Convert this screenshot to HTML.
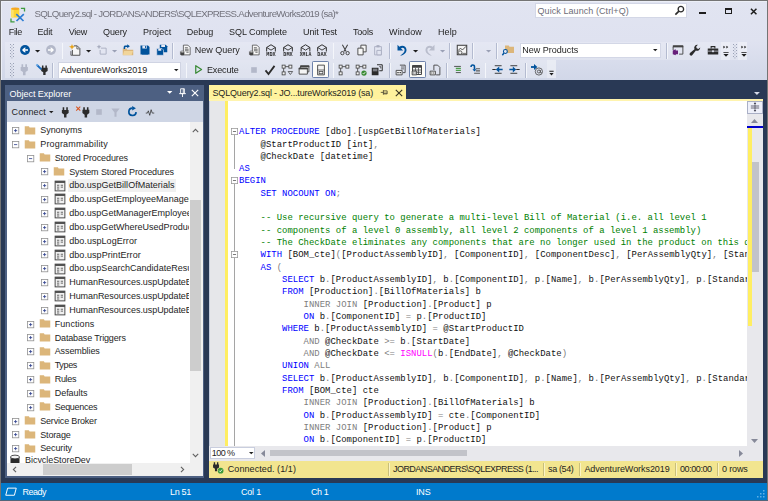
<!DOCTYPE html>
<html lang="en"><head><meta charset="utf-8"><title>SQLQuery2.sql - Microsoft SQL Server Management Studio</title>
<style>
*{box-sizing:border-box;margin:0;padding:0}
html,body{width:768px;height:501px;overflow:hidden;background:#e0e3f0}
body{background:linear-gradient(to bottom,#e1e4f1 0px,#dfe2f0 42px,#d1d7e8 80px,#d1d7e8 100%)}
body{position:relative;font-family:"Liberation Sans", sans-serif;font-size:9px;color:#1e1e1e;}
.a{position:absolute}
svg{overflow:visible}
.t{position:absolute;white-space:pre;line-height:12px;height:12px}
.code{position:absolute;font-family:"Liberation Mono", monospace;font-size:8.93px;letter-spacing:0.022px;line-height:12px;height:12px;white-space:pre;color:#111}
.k{color:#0000ff}.c{color:#008000}.g{color:#808080}.m{color:#ff00ff}
</style></head>
<body>
<div id="win" style="position:absolute;left:0;top:0;width:768px;height:501px;filter:blur(0.3px)">
<div class="a" style="left:5.00px;top:41.60px;width:716.00px;height:18.20px;background:rgba(255,255,255,0.2);"></div>
<div class="a" style="left:721.00px;top:41.60px;width:8.50px;height:18.20px;background:rgba(255,255,255,0.42);"></div>
<div class="a" style="left:729.50px;top:41.60px;width:8.50px;height:18.20px;background:rgba(255,255,255,0.2);"></div>
<div class="a" style="left:738.00px;top:41.60px;width:9.00px;height:18.20px;background:rgba(255,255,255,0.42);"></div>
<div class="a" style="left:5.00px;top:60.40px;width:542.00px;height:18.10px;background:rgba(255,255,255,0.25);"></div>
<div class="a" style="left:547.00px;top:60.40px;width:8.50px;height:18.10px;background:rgba(255,255,255,0.45);"></div>
<svg class="a" style="left:10px;top:5.5px" width="16" height="17" viewBox="0 0 16 17"><rect x="1.200" y="2.400" width="8.100" height="9" rx="0.800" fill="#fcd535"/><rect x="1.200" y="2.400" width="2.500" height="9" fill="#fde36c"/><ellipse cx="5.250" cy="2.700" rx="4.050" ry="1.200" fill="#f6a821"/><path d="M6.300 8.200L13.500 15M13.800 8.200L6.500 15" stroke="#2b7cd3" stroke-width="1.700"/><path d="M10.900 2.300h3.600v3.300" fill="none" stroke="#3f9b3f" stroke-width="1.300"/><path d="M1 12.500v3.300h3.600" fill="none" stroke="#3f9b3f" stroke-width="1.300"/></svg>
<div class="t" id="t1" style="left:34.50px;top:8.31px;color:#72727c;font-size:9.70px;letter-spacing:-0.687px;">SQLQuery2.sql - JORDANSANDERS\SQLEXPRESS.AdventureWorks2019 (sa)*</div>
<div class="a" style="left:534.50px;top:2.80px;width:152.20px;height:15.60px;background:#fff;border:0.5px solid #d3d7e6;"></div>
<div class="t" id="t2" style="left:537.50px;top:5.36px;color:#6d6d78;letter-spacing:0.072px;">Quick Launch (Ctrl+Q)</div>
<svg class="a" style="left:673.50px;top:4.90px" width="11" height="11" viewBox="0 0 16 16"><circle cx="10" cy="6" r="4" fill="none" stroke="#2b2b2b" stroke-width="1.900"/><path d="M7.200 8.800L2 14" stroke="#2b2b2b" stroke-width="2.400"/></svg>
<div class="a" style="left:698.90px;top:11.80px;width:7.20px;height:2.10px;background:#1e1e1e;"></div>
<div class="a" style="left:724.70px;top:8.00px;width:7.70px;height:6.40px;border:1px solid #1e1e1e;border-top-width:2px;"></div>
<svg class="a" style="left:750.30px;top:8.35px" width="7.4" height="6.9" viewBox="0 0 10 10"><path d="M1 1l8 8M9 1l-8 8" stroke="#1e1e1e" stroke-width="2.200"/></svg>
<div class="t" id="t3" style="left:8.75px;top:25.76px;letter-spacing:-0.316px;">File</div>
<div class="t" id="t4" style="left:37.50px;top:25.76px;letter-spacing:-0.129px;">Edit</div>
<div class="t" id="t5" style="left:68.75px;top:25.76px;letter-spacing:-0.277px;">View</div>
<div class="t" id="t6" style="left:103.00px;top:25.76px;letter-spacing:-0.103px;">Query</div>
<div class="t" id="t7" style="left:143.00px;top:25.76px;letter-spacing:0.033px;">Project</div>
<div class="t" id="t8" style="left:186.75px;top:25.76px;letter-spacing:-0.006px;">Debug</div>
<div class="t" id="t9" style="left:229.00px;top:25.76px;letter-spacing:-0.059px;">SQL Complete</div>
<div class="t" id="t10" style="left:303.00px;top:25.76px;letter-spacing:-0.095px;">Unit Test</div>
<div class="t" id="t11" style="left:353.00px;top:25.76px;letter-spacing:-0.203px;">Tools</div>
<div class="t" id="t12" style="left:389.00px;top:25.76px;letter-spacing:0.164px;">Window</div>
<div class="t" id="t13" style="left:438.00px;top:25.76px;letter-spacing:0.121px;">Help</div>
<svg class="a" style="left:9.50px;top:43.50px" width="4" height="14.5" viewBox="0 0 4 14.5"><rect x="0.00" y="0.00" width="0.85" height="0.85" fill="#7f879f"/><rect x="3.00" y="0.00" width="0.85" height="0.85" fill="#7f879f"/><rect x="1.50" y="1.50" width="0.85" height="0.85" fill="#7f879f"/><rect x="0.00" y="3.00" width="0.85" height="0.85" fill="#7f879f"/><rect x="3.00" y="3.00" width="0.85" height="0.85" fill="#7f879f"/><rect x="1.50" y="4.50" width="0.85" height="0.85" fill="#7f879f"/><rect x="0.00" y="6.00" width="0.85" height="0.85" fill="#7f879f"/><rect x="3.00" y="6.00" width="0.85" height="0.85" fill="#7f879f"/><rect x="1.50" y="7.50" width="0.85" height="0.85" fill="#7f879f"/><rect x="0.00" y="9.00" width="0.85" height="0.85" fill="#7f879f"/><rect x="3.00" y="9.00" width="0.85" height="0.85" fill="#7f879f"/><rect x="1.50" y="10.50" width="0.85" height="0.85" fill="#7f879f"/><rect x="0.00" y="12.00" width="0.85" height="0.85" fill="#7f879f"/><rect x="3.00" y="12.00" width="0.85" height="0.85" fill="#7f879f"/><rect x="1.50" y="13.50" width="0.85" height="0.85" fill="#7f879f"/></svg>
<svg class="a" style="left:19.00px;top:44.30px" width="12" height="12" viewBox="0 0 16 16"><circle cx="8" cy="8" r="6.600" fill="#00539c"/><path d="M12 7H7.400l2-2H7L4 8l3 3h2.400l-2-2H12z" fill="#fff"/></svg>
<svg class="a" style="left:35.41px;top:49.98px" width="5.175" height="2.6449999999999996" viewBox="0 0 6 3"><path d="M0 0h6l-3 3z" fill="#1e1e1e"/></svg>
<svg class="a" style="left:45.00px;top:44.30px" width="12" height="12" viewBox="0 0 16 16"><circle cx="8" cy="8" r="6.600" fill="#b3b8c9"/><path d="M4 7h4.6l-2-2H9l3 3-3 3H6.600l2-2H4z" fill="#fff"/></svg>
<div class="a" style="left:61.60px;top:43.00px;width:0.80px;height:15.50px;background:#b4bbd0;"></div>
<div class="a" style="left:62.40px;top:43.00px;width:0.70px;height:15.50px;background:#f4f6fb;"></div>
<svg class="a" style="left:69.00px;top:44.30px" width="12" height="12" viewBox="0 0 16 16"><path d="M6.500 2.500H11l3.500 3.500V15H4.500V8" fill="#f6f6f6" stroke="#424242" stroke-width="1.200"/><path d="M10.500 3v3.500H14" fill="none" stroke="#424242" stroke-width="1"/><path d="M2.500 9.500v5.500M2.500 15h2" stroke="#424242" stroke-width="1"/><path d="M4 0l1.100 2.700L8 3.800 5.100 4.900 4 7.800 2.900 4.900 0 3.800 2.900 2.700z" fill="#e8a317"/></svg>
<svg class="a" style="left:85.51px;top:49.98px" width="5.175" height="2.6449999999999996" viewBox="0 0 6 3"><path d="M0 0h6l-3 3z" fill="#1e1e1e"/></svg>
<svg class="a" style="left:96.00px;top:44.30px" width="12" height="12" viewBox="0 0 16 16"><path d="M6.500 5.500H13.500V13.500H5.500V8" fill="none" stroke="#a8adbf" stroke-width="1.200"/><path d="M4 0.500l1 2.200L7.200 3.700 5 4.700 4 7 3 4.700 0.800 3.700 3 2.700z" fill="#a8adbf"/></svg>
<svg class="a" style="left:111.91px;top:49.98px" width="5.175" height="2.6449999999999996" viewBox="0 0 6 3"><path d="M0 0h6l-3 3z" fill="#9aa0b5"/></svg>
<svg class="a" style="left:122.00px;top:44.30px" width="12" height="12" viewBox="0 0 16 16"><path d="M1 6h5l1 1.500h8V15H1z" fill="#dcb67a"/><path d="M2.800 9.300H14.600l-1.800 5.200H1.300z" fill="#f1d59a"/><path d="M2.200 6.500V4.200C2.200 2.600 3.500 2 5 2h2V0.200L10.500 3 7 5.800V4H5c-.6 0-.8 .3-.8 .8v1.700z" fill="#00539c"/></svg>
<svg class="a" style="left:139.00px;top:44.30px" width="12" height="12" viewBox="0 0 16 16"><path d="M2 2h10l2 2v10H2z" fill="#00539c"/><rect x="4.500" y="2" width="6" height="4" fill="#e6eaf6"/><rect x="8" y="2.800" width="1.600" height="2.400" fill="#00539c"/><rect x="4" y="9" width="8" height="5" fill="#00539c"/></svg>
<svg class="a" style="left:156.00px;top:44.30px" width="12" height="12" viewBox="0 0 16 16"><path d="M5 1h8l2 2v8H5z" fill="#00539c"/><rect x="7" y="1" width="5" height="3" fill="#e6eaf6"/><path d="M1 6h7l2 2v7H1z" fill="#00539c" stroke="#e2e5f1" stroke-width="0.800"/><rect x="3" y="6.400" width="4" height="2.600" fill="#e6eaf6"/></svg>
<div class="a" style="left:172.10px;top:43.00px;width:0.80px;height:15.50px;background:#b4bbd0;"></div>
<div class="a" style="left:172.90px;top:43.00px;width:0.70px;height:15.50px;background:#f4f6fb;"></div>
<svg class="a" style="left:180.00px;top:44.30px" width="12" height="12" viewBox="0 0 16 16"><path d="M4.500 1.500H10.500L13.500 4.500V14.500H4.500z" fill="#f8f8f8" stroke="#424242"/><path d="M6.500 5h4M6.500 7h5M6.500 9h5M8.500 11h3" stroke="#424242" stroke-width="1"/><path d="M0.500 10.500v3.500c0 1.300 5 1.300 5 0v-3.500" fill="#424242" stroke="#424242" stroke-width="0.500"/><ellipse cx="3" cy="10.500" rx="2.500" ry="1.100" fill="#f0f0f0" stroke="#424242" stroke-width="0.800"/></svg>
<div class="t" id="t14" style="left:194.75px;top:44.36px;letter-spacing:-0.002px;">New Query</div>
<svg class="a" style="left:248.75px;top:44.30px" width="12" height="12" viewBox="0 0 16 16"><path d="M4.500 1.500H10.500L13.500 4.500V14.500H4.500z" fill="#f8f8f8" stroke="#424242"/><path d="M6.500 5h4M6.500 7h5M6.500 9h5M8.500 11h3" stroke="#424242" stroke-width="1"/><path d="M0.500 10.500v3.500c0 1.300 5 1.300 5 0v-3.500" fill="#424242" stroke="#424242" stroke-width="0.500"/><ellipse cx="3" cy="10.500" rx="2.500" ry="1.100" fill="#f0f0f0" stroke="#424242" stroke-width="0.800"/></svg>
<svg class="a" style="left:265.00px;top:44.30px" width="12" height="12" viewBox="0 0 16 16"><path d="M2.200 10V4.600L8 1l5.800 3.600V10" fill="none" stroke="#2b2b2b" stroke-width="1.300"/><path d="M2.200 4.600L8 8.200l5.800-3.600" fill="none" stroke="#2b2b2b" stroke-width="1.200"/><text x="8" y="15.600" text-anchor="middle" font-family="Liberation Mono, monospace" font-weight="bold" font-size="6.500" textLength="12.500" lengthAdjust="spacingAndGlyphs" fill="#1e1e1e">MDX</text></svg>
<svg class="a" style="left:281.50px;top:44.30px" width="12" height="12" viewBox="0 0 16 16"><path d="M2.200 10V4.600L8 1l5.800 3.600V10" fill="none" stroke="#2b2b2b" stroke-width="1.300"/><path d="M2.200 4.600L8 8.200l5.800-3.600" fill="none" stroke="#2b2b2b" stroke-width="1.200"/><text x="8" y="15.600" text-anchor="middle" font-family="Liberation Mono, monospace" font-weight="bold" font-size="6.500" textLength="12.500" lengthAdjust="spacingAndGlyphs" fill="#1e1e1e">DMX</text></svg>
<svg class="a" style="left:298.50px;top:44.30px" width="13" height="12" viewBox="0 0 16 16"><path d="M2.200 10V4.600L8 1l5.800 3.600V10" fill="none" stroke="#2b2b2b" stroke-width="1.300"/><path d="M2.200 4.600L8 8.200l5.800-3.600" fill="none" stroke="#2b2b2b" stroke-width="1.200"/><text x="8" y="15.600" text-anchor="middle" font-family="Liberation Mono, monospace" font-weight="bold" font-size="6.500" textLength="15.500" lengthAdjust="spacingAndGlyphs" fill="#1e1e1e">XMLA</text></svg>
<svg class="a" style="left:315.75px;top:44.30px" width="12" height="12" viewBox="0 0 16 16"><path d="M2.200 10V4.600L8 1l5.800 3.600V10" fill="none" stroke="#2b2b2b" stroke-width="1.300"/><path d="M2.200 4.600L8 8.200l5.800-3.600" fill="none" stroke="#2b2b2b" stroke-width="1.200"/><text x="8" y="15.600" text-anchor="middle" font-family="Liberation Mono, monospace" font-weight="bold" font-size="6.500" textLength="12.500" lengthAdjust="spacingAndGlyphs" fill="#1e1e1e">DAX</text></svg>
<div class="a" style="left:332.60px;top:43.00px;width:0.80px;height:15.50px;background:#b4bbd0;"></div>
<div class="a" style="left:333.40px;top:43.00px;width:0.70px;height:15.50px;background:#f4f6fb;"></div>
<svg class="a" style="left:338.75px;top:44.30px" width="12" height="12" viewBox="0 0 16 16"><path d="M4.500 1L9.500 10M11.500 1L6.500 10" stroke="#424242" stroke-width="1.400" fill="none"/><circle cx="4.500" cy="12.200" r="2.200" fill="none" stroke="#424242" stroke-width="1.300"/><circle cx="11.500" cy="12.200" r="2.200" fill="none" stroke="#424242" stroke-width="1.300"/></svg>
<svg class="a" style="left:355.50px;top:44.30px" width="12" height="12" viewBox="0 0 16 16"><path d="M6.500 1.500h7v9h-7z" fill="#f6f6f6" stroke="#424242" stroke-width="1.200"/><path d="M2.500 5.500h7v9h-7z" fill="#f6f6f6" stroke="#424242" stroke-width="1.200"/></svg>
<svg class="a" style="left:371.75px;top:44.30px" width="12" height="12" viewBox="0 0 16 16"><path d="M3.500 3.500h9v11h-9z" fill="none" stroke="#a8adbf" stroke-width="1.200"/><path d="M6 1.500h4v3H6z" fill="#a8adbf"/><path d="M6.500 8.500h6v6h-6z" fill="#e2e5f1" stroke="#a8adbf" stroke-width="1.200"/></svg>
<div class="a" style="left:389.10px;top:43.00px;width:0.80px;height:15.50px;background:#b4bbd0;"></div>
<div class="a" style="left:389.90px;top:43.00px;width:0.70px;height:15.50px;background:#f4f6fb;"></div>
<svg class="a" style="left:396.00px;top:44.30px" width="12" height="12" viewBox="0 0 16 16"><path d="M2 1v7.500h7.500L6.600 5.600C8.600 4.200 11.400 5 11.500 8c.1 2.800-2.500 5-6 7.800 5.500-1.300 8.800-4.300 8.500-8.300C13.700 2.300 8 0.800 4.500 3.600z" fill="#00539c"/></svg>
<svg class="a" style="left:413.16px;top:49.98px" width="5.175" height="2.6449999999999996" viewBox="0 0 6 3"><path d="M0 0h6l-3 3z" fill="#1e1e1e"/></svg>
<svg class="a" style="left:424.00px;top:44.30px" width="12" height="12" viewBox="0 0 16 16"><path d="M14 1v7.500H6.500l2.900-2.900C7.400 4.200 4.600 5 4.500 8c-.1 2.800 2.500 5 6 7.800-5.500-1.300-8.800-4.300-8.500-8.300C2.300 2.300 8 0.800 11.500 3.600z" fill="#b9bdcc"/></svg>
<svg class="a" style="left:439.91px;top:49.98px" width="5.175" height="2.6449999999999996" viewBox="0 0 6 3"><path d="M0 0h6l-3 3z" fill="#9aa0b5"/></svg>
<div class="a" style="left:449.10px;top:43.00px;width:0.80px;height:15.50px;background:#b4bbd0;"></div>
<div class="a" style="left:449.90px;top:43.00px;width:0.70px;height:15.50px;background:#f4f6fb;"></div>
<svg class="a" style="left:455.50px;top:44.30px" width="12" height="12" viewBox="0 0 16 16"><rect x="1.700" y="1.700" width="12.600" height="12.600" fill="#f4f4f4" stroke="#424242" stroke-width="1.400"/><path d="M2.500 9l3.500-3.500 2.500 2.500 5-5" fill="none" stroke="#424242" stroke-width="1.200"/><circle cx="5.500" cy="11.500" r="2.400" fill="#f4f4f4" stroke="#424242" stroke-width="1.100"/><path d="M8.500 12.500h5" stroke="#424242" stroke-width="1"/></svg>
<div class="a" style="left:472.10px;top:43.00px;width:0.80px;height:15.50px;background:#b4bbd0;"></div>
<div class="a" style="left:472.90px;top:43.00px;width:0.70px;height:15.50px;background:#f4f6fb;"></div>
<svg class="a" style="left:486.41px;top:49.98px" width="5.175" height="2.6449999999999996" viewBox="0 0 6 3"><path d="M0 0h6l-3 3z" fill="#9aa0b5"/></svg>
<div class="a" style="left:496.10px;top:43.00px;width:0.80px;height:15.50px;background:#b4bbd0;"></div>
<div class="a" style="left:496.90px;top:43.00px;width:0.70px;height:15.50px;background:#f4f6fb;"></div>
<svg class="a" style="left:502.00px;top:44.30px" width="12" height="12" viewBox="0 0 16 16"><path d="M4 2h5l1 1.500h6V12H4z" fill="#dcb67a"/><circle cx="4.500" cy="10" r="2.600" fill="#e2e5f1" stroke="#00539c" stroke-width="1.400"/><path d="M2.600 12L0.500 15" stroke="#00539c" stroke-width="1.800"/></svg>
<div class="a" style="left:519.60px;top:42.90px;width:141.40px;height:15.60px;background:#fff;border:0.5px solid #d3d7e6;"></div>
<div class="t" id="t15" style="left:522.30px;top:44.26px;letter-spacing:-0.003px;">New Products</div>
<svg class="a" style="left:653.25px;top:49.45px" width="4.5" height="2.3" viewBox="0 0 6 3"><path d="M0 0h6l-3 3z" fill="#1e1e1e"/></svg>
<div class="a" style="left:666.10px;top:43.00px;width:0.80px;height:15.50px;background:#b4bbd0;"></div>
<div class="a" style="left:666.90px;top:43.00px;width:0.70px;height:15.50px;background:#f4f6fb;"></div>
<svg class="a" style="left:671.50px;top:44.30px" width="12" height="12" viewBox="0 0 16 16"><path d="M1.500 2.500h13v11h-5" fill="none" stroke="#424242" stroke-width="1.200"/><path d="M1 2h14v2.500H1z" fill="#424242"/><path d="M1.500 4v4" stroke="#424242" stroke-width="1.200"/><path d="M1 8.500l4-1.500v8l-4-1.500z M5 8.500h3v5H5z" fill="#68217a"/></svg>
<svg class="a" style="left:689.00px;top:44.30px" width="12" height="12" viewBox="0 0 16 16"><path d="M15 4.800a4.300 4.300 0 0 1-5.800 4L4.500 14.800a2 2 0 0 1-3.200-2.800l6-5A4.300 4.300 0 0 1 11.800 1L9.500 3.600l.800 2.200 2.200.800z" fill="#2b2b2b"/></svg>
<svg class="a" style="left:706.50px;top:44.30px" width="12" height="12" viewBox="0 0 16 16"><path d="M1 6h14v8H1z" fill="#2b2b2b"/><path d="M5.500 6V3.500h5V6" fill="none" stroke="#2b2b2b" stroke-width="1.400"/><path d="M1 9.500h14" stroke="#e2e5f1" stroke-width="0.900"/><rect x="6.800" y="8.500" width="2.400" height="2.400" fill="#e2e5f1"/></svg>
<svg class="a" style="left:723.00px;top:44.80px" width="6" height="12" viewBox="0 0 8 16"><path d="M0.500 1l2.500 1.800L0.500 4.600zM4.500 1L7 2.800 4.500 4.600z" fill="#1e1e1e"/><path d="M0.500 9.500h7v1.300h-7z M0.500 12h7L4 15.500z" fill="#1e1e1e"/></svg>
<svg class="a" style="left:732.50px;top:43.50px" width="4" height="14.5" viewBox="0 0 4 14.5"><rect x="0.00" y="0.00" width="0.85" height="0.85" fill="#7f879f"/><rect x="3.00" y="0.00" width="0.85" height="0.85" fill="#7f879f"/><rect x="1.50" y="1.50" width="0.85" height="0.85" fill="#7f879f"/><rect x="0.00" y="3.00" width="0.85" height="0.85" fill="#7f879f"/><rect x="3.00" y="3.00" width="0.85" height="0.85" fill="#7f879f"/><rect x="1.50" y="4.50" width="0.85" height="0.85" fill="#7f879f"/><rect x="0.00" y="6.00" width="0.85" height="0.85" fill="#7f879f"/><rect x="3.00" y="6.00" width="0.85" height="0.85" fill="#7f879f"/><rect x="1.50" y="7.50" width="0.85" height="0.85" fill="#7f879f"/><rect x="0.00" y="9.00" width="0.85" height="0.85" fill="#7f879f"/><rect x="3.00" y="9.00" width="0.85" height="0.85" fill="#7f879f"/><rect x="1.50" y="10.50" width="0.85" height="0.85" fill="#7f879f"/><rect x="0.00" y="12.00" width="0.85" height="0.85" fill="#7f879f"/><rect x="3.00" y="12.00" width="0.85" height="0.85" fill="#7f879f"/><rect x="1.50" y="13.50" width="0.85" height="0.85" fill="#7f879f"/></svg>
<svg class="a" style="left:741.00px;top:44.80px" width="6" height="12" viewBox="0 0 8 16"><path d="M0.500 1l2.500 1.800L0.500 4.600zM4.500 1L7 2.800 4.500 4.600z" fill="#1e1e1e"/><path d="M0.500 9.500h7v1.300h-7z M0.500 12h7L4 15.500z" fill="#1e1e1e"/></svg>
<svg class="a" style="left:9.50px;top:63.00px" width="4" height="15.0" viewBox="0 0 4 15.0"><rect x="0.00" y="0.00" width="0.85" height="0.85" fill="#7f879f"/><rect x="3.00" y="0.00" width="0.85" height="0.85" fill="#7f879f"/><rect x="1.50" y="1.50" width="0.85" height="0.85" fill="#7f879f"/><rect x="0.00" y="3.00" width="0.85" height="0.85" fill="#7f879f"/><rect x="3.00" y="3.00" width="0.85" height="0.85" fill="#7f879f"/><rect x="1.50" y="4.50" width="0.85" height="0.85" fill="#7f879f"/><rect x="0.00" y="6.00" width="0.85" height="0.85" fill="#7f879f"/><rect x="3.00" y="6.00" width="0.85" height="0.85" fill="#7f879f"/><rect x="1.50" y="7.50" width="0.85" height="0.85" fill="#7f879f"/><rect x="0.00" y="9.00" width="0.85" height="0.85" fill="#7f879f"/><rect x="3.00" y="9.00" width="0.85" height="0.85" fill="#7f879f"/><rect x="1.50" y="10.50" width="0.85" height="0.85" fill="#7f879f"/><rect x="0.00" y="12.00" width="0.85" height="0.85" fill="#7f879f"/><rect x="3.00" y="12.00" width="0.85" height="0.85" fill="#7f879f"/><rect x="1.50" y="13.50" width="0.85" height="0.85" fill="#7f879f"/></svg>
<svg class="a" style="left:18.75px;top:64.15px" width="10.5" height="11.5" viewBox="1 0 14 16"><path d="M4.200 0.500h2.300v4h-2.300zM9.500 0.500h2.300v4h-2.300zM3 4.300h10v4.700L9.800 11.200V15.500H6.200V11.200L3 9z" fill="#b3b8c9"/></svg>
<svg class="a" style="left:36.25px;top:64.15px" width="11.5" height="11.5" viewBox="0 0 16 16"><g transform="translate(4.500,1.500) scale(0.9)"><path d="M4.200 0.500h2.300v4h-2.300zM9.500 0.500h2.300v4h-2.300zM3 4.300h10v4.700L9.800 11.200V15.500H6.200V11.200L3 9z" fill="#2b2b2b"/></g><path d="M1 1L7.500 7.500" stroke="#1b6ec2" stroke-width="2.600"/><path d="M0.500 0.500L2.200 2.200" stroke="#7db4e6" stroke-width="2.600"/></svg>
<div class="a" style="left:52.10px;top:62.50px;width:0.80px;height:15.50px;background:#b4bbd0;"></div>
<div class="a" style="left:52.90px;top:62.50px;width:0.70px;height:15.50px;background:#f4f6fb;"></div>
<div class="a" style="left:58.00px;top:61.50px;width:122.50px;height:17.00px;background:#fff;border:0.8px solid #d0d4e3;"></div>
<div class="t" id="t16" style="left:60.75px;top:64.06px;letter-spacing:0.006px;">AdventureWorks2019</div>
<svg class="a" style="left:173.75px;top:69.05px" width="4.5" height="2.3" viewBox="0 0 6 3"><path d="M0 0h6l-3 3z" fill="#1e1e1e"/></svg>
<div class="a" style="left:185.60px;top:62.50px;width:0.80px;height:15.50px;background:#b4bbd0;"></div>
<div class="a" style="left:186.40px;top:62.50px;width:0.70px;height:15.50px;background:#f4f6fb;"></div>
<svg class="a" style="left:192.50px;top:64.40px" width="11" height="11" viewBox="0 0 16 16"><path d="M4 2.500L12.500 8 4 13.500z" fill="none" stroke="#388a34" stroke-width="1.800" stroke-linejoin="round"/></svg>
<div class="t" id="t17" style="left:207.00px;top:64.06px;letter-spacing:-0.147px;">Execute</div>
<svg class="a" style="left:248.50px;top:64.90px" width="10" height="10" viewBox="0 0 16 16"><rect x="3.500" y="3.500" width="9" height="9" fill="#b3b8c9"/></svg>
<svg class="a" style="left:263.75px;top:63.90px" width="12" height="12" viewBox="0 0 16 16"><path d="M2 8.500L6 13.500 14 2.500" fill="none" stroke="#2b2b2b" stroke-width="2.400"/></svg>
<svg class="a" style="left:281.00px;top:63.90px" width="12" height="12" viewBox="0 0 16 16"><rect x="1.500" y="1.500" width="4" height="4" fill="#f4f4f4" stroke="#424242" stroke-width="1.100"/><rect x="10.500" y="1.500" width="4" height="4" fill="#f4f4f4" stroke="#424242" stroke-width="1.100"/><rect x="1.500" y="10.500" width="4" height="4" fill="#f4f4f4" stroke="#424242" stroke-width="1.100"/><path d="M5.500 3.500h5M3.500 5.500v5" stroke="#424242" stroke-width="1.100"/><path d="M9.500 10h6L12.500 14z" fill="none" stroke="#424242" stroke-width="1"/></svg>
<svg class="a" style="left:298.00px;top:63.90px" width="12" height="12" viewBox="0 0 16 16"><path d="M3.500 2.500h11v8h-11z" fill="#f4f4f4" stroke="#424242" stroke-width="1.200"/><path d="M3 2h12v2.200H3z" fill="#424242"/><path d="M1.500 5.500h11v8h-11z" fill="#f4f4f4" stroke="#424242" stroke-width="1.200"/><path d="M1 5h12v2.200H1z" fill="#424242"/></svg>
<div class="a" style="left:312.30px;top:61.30px;width:17.20px;height:17.00px;background:#fdfcf8;border:0.9px solid #6f83ab;border-radius:1.2px;"></div>
<svg class="a" style="left:314.90px;top:63.90px" width="12" height="12" viewBox="0 0 16 16"><path d="M3.500 1.500h9v13h-9z" fill="#f4f4f4" stroke="#424242" stroke-width="1.200"/><path d="M3 8h10" stroke="#424242" stroke-width="1"/><rect x="5.500" y="10" width="5" height="3" fill="#f4f4f4" stroke="#424242" stroke-width="1"/></svg>
<div class="a" style="left:332.60px;top:62.50px;width:0.80px;height:15.50px;background:#b4bbd0;"></div>
<div class="a" style="left:333.40px;top:62.50px;width:0.70px;height:15.50px;background:#f4f6fb;"></div>
<svg class="a" style="left:338.00px;top:63.90px" width="12" height="12" viewBox="0 0 16 16"><rect x="1.500" y="1.500" width="4" height="4" fill="#f4f4f4" stroke="#424242" stroke-width="1.100"/><rect x="10.500" y="1.500" width="4" height="4" fill="#f4f4f4" stroke="#424242" stroke-width="1.100"/><rect x="1.500" y="10.500" width="4" height="4" fill="#f4f4f4" stroke="#424242" stroke-width="1.100"/><path d="M5.500 3.500h5M3.500 5.500v5" stroke="#424242" stroke-width="1.100"/></svg>
<svg class="a" style="left:355.00px;top:63.90px" width="12" height="12" viewBox="0 0 16 16"><rect x="1.500" y="1.500" width="4" height="4" fill="#f4f4f4" stroke="#424242" stroke-width="1.100"/><rect x="10.500" y="1.500" width="4" height="4" fill="#f4f4f4" stroke="#424242" stroke-width="1.100"/><rect x="1.500" y="10.500" width="4" height="4" fill="#f4f4f4" stroke="#424242" stroke-width="1.100"/><path d="M5.500 3.500h5M3.500 5.500v5" stroke="#424242" stroke-width="1.100"/><circle cx="12" cy="12" r="3.500" fill="#388a34"/><path d="M10.200 12l1.400 1.500 2.300-3" stroke="#fff" stroke-width="1" fill="none"/></svg>
<svg class="a" style="left:371.00px;top:63.90px" width="12" height="12" viewBox="0 0 16 16"><path d="M1 5h9v10H1z" fill="#2b2b2b"/><path d="M2.500 7h6M2.500 9h6" stroke="#e2e5f1" stroke-width="0.800"/><path d="M8 1h7v8h-4" fill="none" stroke="#2b2b2b" stroke-width="1.300"/><path d="M11 3.500h2v2.500" stroke="#2b2b2b" stroke-width="1" fill="none"/></svg>
<div class="a" style="left:389.10px;top:62.50px;width:0.80px;height:15.50px;background:#b4bbd0;"></div>
<div class="a" style="left:389.90px;top:62.50px;width:0.70px;height:15.50px;background:#f4f6fb;"></div>
<svg class="a" style="left:394.75px;top:63.90px" width="12" height="12" viewBox="0 0 16 16"><path d="M6.500 1.500h7v10h-3" fill="none" stroke="#424242" stroke-width="1.200"/><path d="M8 4h4M8 6.500h4" stroke="#424242" stroke-width="1"/><path d="M1.500 8.500h8v6h-8z" fill="#f4f4f4" stroke="#424242" stroke-width="1.200"/><path d="M3 11.500h2M6 11.500h2" stroke="#424242" stroke-width="1.600"/></svg>
<div class="a" style="left:408.80px;top:61.30px;width:17.00px;height:17.00px;background:#fdfcf8;border:0.9px solid #6f83ab;border-radius:1.2px;"></div>
<svg class="a" style="left:411.40px;top:63.90px" width="12" height="12" viewBox="0 0 16 16"><path d="M2 2h12v12H2z" fill="#f4f4f4" stroke="#424242" stroke-width="1.300"/><path d="M2 2h12v3H2z" fill="#424242"/><path d="M2 8h12M2 11h12M6 5v9M10 5v9" stroke="#424242" stroke-width="1"/><path d="M1.500 9.500h6v5h-6z" fill="#f4f4f4" stroke="#424242" stroke-width="1.200"/><path d="M3 12h1.200M5 12h1.200" stroke="#424242" stroke-width="1.500"/></svg>
<svg class="a" style="left:428.50px;top:63.90px" width="12" height="12" viewBox="0 0 16 16"><path d="M6.500 8V1.500h5l3 3v10h-5" fill="none" stroke="#424242" stroke-width="1.200"/><path d="M1.500 9.500h7v5h-7z" fill="#f4f4f4" stroke="#424242" stroke-width="1.200"/><path d="M3 12h1.500M5.500 12h1.500" stroke="#424242" stroke-width="1.500"/></svg>
<div class="a" style="left:446.10px;top:62.50px;width:0.80px;height:15.50px;background:#b4bbd0;"></div>
<div class="a" style="left:446.90px;top:62.50px;width:0.70px;height:15.50px;background:#f4f6fb;"></div>
<svg class="a" style="left:453.00px;top:64.90px" width="9" height="9" viewBox="0 0 16 16"><path d="M2 2.500h12M5 13.500h9" stroke="#3a3a3a" stroke-width="1.500"/><path d="M5 6h9M5 9.500h9" stroke="#4da04a" stroke-width="2.200"/></svg>
<svg class="a" style="left:469.50px;top:64.10px" width="11" height="11" viewBox="0 0 16 16"><path d="M8.500 7h6M8.500 10h6M6 13.500h8.500" stroke="#5a5a5a" stroke-width="1.500"/><path d="M6.500 8V4C6.500 0.500 1.500 0.500 1.500 4.500" fill="none" stroke="#00539c" stroke-width="2.300"/><path d="M3.500 7.500h6l-3 3.500z" fill="#00539c"/></svg>
<div class="a" style="left:484.60px;top:62.50px;width:0.80px;height:15.50px;background:#b4bbd0;"></div>
<div class="a" style="left:485.40px;top:62.50px;width:0.70px;height:15.50px;background:#f4f6fb;"></div>
<svg class="a" style="left:492.25px;top:64.40px" width="11" height="11" viewBox="0 0 16 16"><path d="M4 2.500h10M4 13.500h10" stroke="#2b2b2b" stroke-width="1.300"/><path d="M0.500 8h5" stroke="#2b2b2b" stroke-width="1.500"/><path d="M15.500 8H9" stroke="#00539c" stroke-width="2.200"/><path d="M5.500 8l5-4.300v8.600z" fill="#00539c"/></svg>
<svg class="a" style="left:508.50px;top:64.40px" width="11" height="11" viewBox="0 0 16 16"><path d="M2 2.500h10M2 13.500h10" stroke="#2b2b2b" stroke-width="1.300"/><path d="M10.500 8h5" stroke="#2b2b2b" stroke-width="1.500"/><path d="M0.500 8H7" stroke="#00539c" stroke-width="2.200"/><path d="M10.500 8l-5-4.300v8.600z" fill="#00539c"/></svg>
<div class="a" style="left:525.35px;top:62.50px;width:0.80px;height:15.50px;background:#b4bbd0;"></div>
<div class="a" style="left:526.15px;top:62.50px;width:0.70px;height:15.50px;background:#f4f6fb;"></div>
<svg class="a" style="left:531.00px;top:63.60px" width="12" height="12" viewBox="0 0 16 16"><path d="M0 4h5" stroke="#00539c" stroke-width="2.400"/><path d="M8.500 4L4 0v8z" fill="#00539c"/><circle cx="10.500" cy="10" r="4.800" fill="none" stroke="#4a4a4a" stroke-width="1.100"/><circle cx="10.500" cy="10" r="2" fill="none" stroke="#4a4a4a" stroke-width="1.100"/><path d="M12.500 8v3.200c0 1 1.500 1 2 0" fill="none" stroke="#4a4a4a" stroke-width="1"/></svg>
<svg class="a" style="left:549.00px;top:69.90px" width="5" height="6" viewBox="0 0 7 8"><path d="M0.500 1h6v1.200h-6z M0.500 4h6L3.500 7.500z" fill="#1e1e1e"/></svg>
<div class="a" style="left:0.00px;top:80.00px;width:768.00px;height:403.00px;background:#293955;"></div>
<div class="a" style="left:0.00px;top:482.50px;width:768.00px;height:18.50px;background:#007acc;"></div>
<svg class="a" style="left:4.50px;top:486.00px" width="12" height="11" viewBox="0 0 16 14"><path d="M3.500 2.500H15L12.500 12H1z" fill="none" stroke="#fff" stroke-width="1.300"/></svg>
<div class="t" id="t18" style="left:22.50px;top:486.06px;color:#fff;letter-spacing:-0.503px;">Ready</div>
<div class="t" id="t19" style="left:170.00px;top:486.06px;color:#fff;letter-spacing:-0.306px;">Ln 51</div>
<div class="t" id="t20" style="left:241.00px;top:486.06px;color:#fff;letter-spacing:-0.203px;">Col 1</div>
<div class="t" id="t21" style="left:311.00px;top:486.06px;color:#fff;letter-spacing:-0.379px;">Ch 1</div>
<div class="t" id="t22" style="left:416.00px;top:486.06px;color:#fff;letter-spacing:-0.172px;">INS</div>
<svg class="a" style="left:756.75px;top:489.75px" width="7.5" height="7.5" viewBox="0 0 10 10"><path d="M8 0h2v2H8zM8 4h2v2H8zM4 4h2v2H4zM8 8h2v2H8zM4 8h2v2H4zM0 8h2v2H0z" fill="#5fb0e6"/></svg>
<div class="a" style="left:5.00px;top:85.00px;width:199.25px;height:392.50px;background:#4d6082;"></div>
<div class="a" style="left:5.00px;top:85.00px;width:199.25px;height:16.00px;background:#4d6082;"></div>
<div class="t" id="t23" style="left:9.60px;top:87.66px;color:#fff;letter-spacing:-0.035px;">Object Explorer</div>
<svg class="a" style="left:167.30px;top:91.42px" width="5.3999999999999995" height="2.76" viewBox="0 0 6 3"><path d="M0 0h6l-3 3z" fill="#fff"/></svg>
<svg class="a" style="left:178.25px;top:87.62px" width="9" height="9.75" viewBox="0 0 12 13"><path d="M3.500 1h5v6.500h-5zM7 1v6.500" fill="none" stroke="#fff" stroke-width="1.200"/><path d="M1.500 7.500h9M6 7.500V12" stroke="#fff" stroke-width="1.200"/></svg>
<svg class="a" style="left:191.00px;top:89.00px" width="8" height="8" viewBox="0 0 10 10"><path d="M1 1l8 8M9 1l-8 8" stroke="#fff" stroke-width="1.400"/></svg>
<div class="a" style="left:6.50px;top:101.00px;width:196.00px;height:20.70px;background:#cfd6e5;"></div>
<div class="t" id="t24" style="left:11.60px;top:105.56px;color:#1e1e1e;letter-spacing:0.103px;">Connect</div>
<svg class="a" style="left:48.50px;top:111.35px" width="4.5" height="2.3" viewBox="0 0 6 3"><path d="M0 0h6l-3 3z" fill="#1e1e1e"/></svg>
<svg class="a" style="left:60.25px;top:106.60px" width="10.5" height="10.8" viewBox="1 0 14 16"><path d="M4.200 0.500h2.300v4h-2.300zM9.500 0.500h2.300v4h-2.300zM3 4.300h10v4.700L9.800 11.200V15.500H6.200V11.200L3 9z" fill="#2b2b2b"/></svg>
<svg class="a" style="left:75.80px;top:106.00px" width="12" height="12" viewBox="0 0 16 16"><g transform="translate(5.800,1.200) scale(0.92)"><path d="M4.200 0.500h2.300v4h-2.300zM9.500 0.500h2.300v4h-2.300zM3 4.300h10v4.700L9.800 11.200V15.500H6.200V11.200L3 9z" fill="#2b2b2b"/></g><path d="M0.300 0.800l5.400 5.400M5.700 0.800l-5.400 5.400" stroke="#d9531e" stroke-width="1.400"/></svg>
<svg class="a" style="left:94.25px;top:107.00px" width="10" height="10" viewBox="0 0 16 16"><rect x="3.500" y="3.500" width="9" height="9" fill="#b3b8c9"/></svg>
<svg class="a" style="left:110.00px;top:106.80px" width="11" height="11" viewBox="0 0 16 16"><path d="M2 2h12L9.500 8v6h-3V8z" fill="#b3b8c9"/></svg>
<svg class="a" style="left:127.20px;top:106.30px" width="11" height="11" viewBox="0 0 16 16"><path d="M13.300 9A5.300 5.300 0 1 1 8 3.200" fill="none" stroke="#00539c" stroke-width="2.500"/><path d="M7.500 0l5.500 3.200L7.500 6.600z" fill="#00539c"/></svg>
<svg class="a" style="left:143.70px;top:107.50px" width="12" height="9" viewBox="0 0 16 16"><path d="M0.500 9h3l1.500-4 2.500 8 2.500-10 2 6h3.500" fill="none" stroke="#2b2b2b" stroke-width="1.300"/></svg>
<div class="a" style="left:6.50px;top:121.70px;width:196.00px;height:341.50px;background:#fff;overflow:hidden;"></div>
<div class="a" id="tree" style="left:6.5px;top:121.7px;width:182.2px;height:341.5px;background:#fff;overflow:hidden">
<svg class="a" style="left:5.50px;top:5.20px" width="7.2" height="7.2" viewBox="0 0 9 9"><rect x="0.500" y="0.500" width="8" height="8" fill="#fff" stroke="#919191" stroke-width="1"/><path d="M2.500 4.500h4M4.500 2.500v4" stroke="#2b3c8c" stroke-width="1"/></svg>
<svg class="a" style="left:17.90px;top:2.00px" width="12" height="12" viewBox="0 0 16 16"><path d="M1 3h5.500l1 1.500H15V14H1z" fill="#dcb67a"/></svg>
<div class="t" id="t25" style="left:33.70px;top:2.36px;letter-spacing:-0.029px;">Synonyms</div>
<svg class="a" style="left:5.50px;top:19.04px" width="7.2" height="7.2" viewBox="0 0 9 9"><rect x="0.500" y="0.500" width="8" height="8" fill="#fff" stroke="#919191" stroke-width="1"/><path d="M2.500 4.500h4" stroke="#2b3c8c" stroke-width="1"/></svg>
<svg class="a" style="left:17.90px;top:15.84px" width="12" height="12" viewBox="0 0 16 16"><path d="M1 3h5.500l1 1.500H15V14H1z" fill="#dcb67a"/></svg>
<div class="t" id="t26" style="left:33.70px;top:16.20px;letter-spacing:0.185px;">Programmability</div>
<svg class="a" style="left:20.00px;top:32.88px" width="7.2" height="7.2" viewBox="0 0 9 9"><rect x="0.500" y="0.500" width="8" height="8" fill="#fff" stroke="#919191" stroke-width="1"/><path d="M2.500 4.500h4" stroke="#2b3c8c" stroke-width="1"/></svg>
<svg class="a" style="left:32.40px;top:29.68px" width="12" height="12" viewBox="0 0 16 16"><path d="M1 3h5.500l1 1.500H15V14H1z" fill="#dcb67a"/></svg>
<div class="t" id="t27" style="left:48.20px;top:30.04px;letter-spacing:-0.103px;">Stored Procedures</div>
<svg class="a" style="left:34.50px;top:46.72px" width="7.2" height="7.2" viewBox="0 0 9 9"><rect x="0.500" y="0.500" width="8" height="8" fill="#fff" stroke="#919191" stroke-width="1"/><path d="M2.500 4.500h4M4.500 2.500v4" stroke="#2b3c8c" stroke-width="1"/></svg>
<svg class="a" style="left:46.90px;top:43.52px" width="12" height="12" viewBox="0 0 16 16"><path d="M1 3h5.500l1 1.500H15V14H1z" fill="#dcb67a"/></svg>
<div class="t" id="t28" style="left:62.70px;top:43.88px;letter-spacing:-0.115px;">System Stored Procedures</div>
<div class="a" style="left:61.30px;top:57.46px;width:108.60px;height:12.80px;background:#f0f0f0;"></div>
<svg class="a" style="left:34.50px;top:60.56px" width="7.2" height="7.2" viewBox="0 0 9 9"><rect x="0.500" y="0.500" width="8" height="8" fill="#fff" stroke="#919191" stroke-width="1"/><path d="M2.500 4.500h4M4.500 2.500v4" stroke="#2b3c8c" stroke-width="1"/></svg>
<svg class="a" style="left:47.40px;top:57.86px" width="12" height="12" viewBox="0 0 16 16"><rect x="1.500" y="1.500" width="13" height="13" fill="#f0f0f0" stroke="#484848" stroke-width="1.300"/><path d="M1.500 2.700h13" stroke="#484848" stroke-width="2.400"/><path d="M4 7h3M4 9.500h3M4 12h3M9 7h3M9 9.500h3" stroke="#5a5a5a" stroke-width="1.200"/></svg>
<div class="t" id="t29" style="left:62.70px;top:57.72px;letter-spacing:0.030px;">dbo.uspGetBillOfMaterials</div>
<svg class="a" style="left:34.50px;top:74.40px" width="7.2" height="7.2" viewBox="0 0 9 9"><rect x="0.500" y="0.500" width="8" height="8" fill="#fff" stroke="#919191" stroke-width="1"/><path d="M2.500 4.500h4M4.500 2.500v4" stroke="#2b3c8c" stroke-width="1"/></svg>
<svg class="a" style="left:47.40px;top:71.70px" width="12" height="12" viewBox="0 0 16 16"><rect x="1.500" y="1.500" width="13" height="13" fill="#f0f0f0" stroke="#484848" stroke-width="1.300"/><path d="M1.500 2.700h13" stroke="#484848" stroke-width="2.400"/><path d="M4 7h3M4 9.500h3M4 12h3M9 7h3M9 9.500h3" stroke="#5a5a5a" stroke-width="1.200"/></svg>
<div class="t" id="t30" style="left:62.70px;top:71.56px;letter-spacing:0.02px;">dbo.uspGetEmployeeManagers</div>
<svg class="a" style="left:34.50px;top:88.24px" width="7.2" height="7.2" viewBox="0 0 9 9"><rect x="0.500" y="0.500" width="8" height="8" fill="#fff" stroke="#919191" stroke-width="1"/><path d="M2.500 4.500h4M4.500 2.500v4" stroke="#2b3c8c" stroke-width="1"/></svg>
<svg class="a" style="left:47.40px;top:85.54px" width="12" height="12" viewBox="0 0 16 16"><rect x="1.500" y="1.500" width="13" height="13" fill="#f0f0f0" stroke="#484848" stroke-width="1.300"/><path d="M1.500 2.700h13" stroke="#484848" stroke-width="2.400"/><path d="M4 7h3M4 9.500h3M4 12h3M9 7h3M9 9.500h3" stroke="#5a5a5a" stroke-width="1.200"/></svg>
<div class="t" id="t31" style="left:62.70px;top:85.40px;letter-spacing:0.02px;">dbo.uspGetManagerEmployees</div>
<svg class="a" style="left:34.50px;top:102.08px" width="7.2" height="7.2" viewBox="0 0 9 9"><rect x="0.500" y="0.500" width="8" height="8" fill="#fff" stroke="#919191" stroke-width="1"/><path d="M2.500 4.500h4M4.500 2.500v4" stroke="#2b3c8c" stroke-width="1"/></svg>
<svg class="a" style="left:47.40px;top:99.38px" width="12" height="12" viewBox="0 0 16 16"><rect x="1.500" y="1.500" width="13" height="13" fill="#f0f0f0" stroke="#484848" stroke-width="1.300"/><path d="M1.500 2.700h13" stroke="#484848" stroke-width="2.400"/><path d="M4 7h3M4 9.500h3M4 12h3M9 7h3M9 9.500h3" stroke="#5a5a5a" stroke-width="1.200"/></svg>
<div class="t" id="t32" style="left:62.70px;top:99.24px;letter-spacing:0.02px;">dbo.uspGetWhereUsedProductID</div>
<svg class="a" style="left:34.50px;top:115.92px" width="7.2" height="7.2" viewBox="0 0 9 9"><rect x="0.500" y="0.500" width="8" height="8" fill="#fff" stroke="#919191" stroke-width="1"/><path d="M2.500 4.500h4M4.500 2.500v4" stroke="#2b3c8c" stroke-width="1"/></svg>
<svg class="a" style="left:47.40px;top:113.22px" width="12" height="12" viewBox="0 0 16 16"><rect x="1.500" y="1.500" width="13" height="13" fill="#f0f0f0" stroke="#484848" stroke-width="1.300"/><path d="M1.500 2.700h13" stroke="#484848" stroke-width="2.400"/><path d="M4 7h3M4 9.500h3M4 12h3M9 7h3M9 9.500h3" stroke="#5a5a5a" stroke-width="1.200"/></svg>
<div class="t" id="t33" style="left:62.70px;top:113.08px;letter-spacing:0.050px;">dbo.uspLogError</div>
<svg class="a" style="left:34.50px;top:129.76px" width="7.2" height="7.2" viewBox="0 0 9 9"><rect x="0.500" y="0.500" width="8" height="8" fill="#fff" stroke="#919191" stroke-width="1"/><path d="M2.500 4.500h4M4.500 2.500v4" stroke="#2b3c8c" stroke-width="1"/></svg>
<svg class="a" style="left:47.40px;top:127.06px" width="12" height="12" viewBox="0 0 16 16"><rect x="1.500" y="1.500" width="13" height="13" fill="#f0f0f0" stroke="#484848" stroke-width="1.300"/><path d="M1.500 2.700h13" stroke="#484848" stroke-width="2.400"/><path d="M4 7h3M4 9.500h3M4 12h3M9 7h3M9 9.500h3" stroke="#5a5a5a" stroke-width="1.200"/></svg>
<div class="t" id="t34" style="left:62.70px;top:126.92px;letter-spacing:0.062px;">dbo.uspPrintError</div>
<svg class="a" style="left:34.50px;top:143.60px" width="7.2" height="7.2" viewBox="0 0 9 9"><rect x="0.500" y="0.500" width="8" height="8" fill="#fff" stroke="#919191" stroke-width="1"/><path d="M2.500 4.500h4M4.500 2.500v4" stroke="#2b3c8c" stroke-width="1"/></svg>
<svg class="a" style="left:47.40px;top:140.90px" width="12" height="12" viewBox="0 0 16 16"><rect x="1.500" y="1.500" width="13" height="13" fill="#f0f0f0" stroke="#484848" stroke-width="1.300"/><path d="M1.500 2.700h13" stroke="#484848" stroke-width="2.400"/><path d="M4 7h3M4 9.500h3M4 12h3M9 7h3M9 9.500h3" stroke="#5a5a5a" stroke-width="1.200"/></svg>
<div class="t" id="t35" style="left:62.70px;top:140.76px;letter-spacing:0.02px;">dbo.uspSearchCandidateResumes</div>
<svg class="a" style="left:34.50px;top:157.44px" width="7.2" height="7.2" viewBox="0 0 9 9"><rect x="0.500" y="0.500" width="8" height="8" fill="#fff" stroke="#919191" stroke-width="1"/><path d="M2.500 4.500h4M4.500 2.500v4" stroke="#2b3c8c" stroke-width="1"/></svg>
<svg class="a" style="left:47.40px;top:154.74px" width="12" height="12" viewBox="0 0 16 16"><rect x="1.500" y="1.500" width="13" height="13" fill="#f0f0f0" stroke="#484848" stroke-width="1.300"/><path d="M1.500 2.700h13" stroke="#484848" stroke-width="2.400"/><path d="M4 7h3M4 9.500h3M4 12h3M9 7h3M9 9.500h3" stroke="#5a5a5a" stroke-width="1.200"/></svg>
<div class="t" id="t36" style="left:62.70px;top:154.60px;letter-spacing:-0.06px;">HumanResources.uspUpdateEmployeeHireInfo</div>
<svg class="a" style="left:34.50px;top:171.28px" width="7.2" height="7.2" viewBox="0 0 9 9"><rect x="0.500" y="0.500" width="8" height="8" fill="#fff" stroke="#919191" stroke-width="1"/><path d="M2.500 4.500h4M4.500 2.500v4" stroke="#2b3c8c" stroke-width="1"/></svg>
<svg class="a" style="left:47.40px;top:168.58px" width="12" height="12" viewBox="0 0 16 16"><rect x="1.500" y="1.500" width="13" height="13" fill="#f0f0f0" stroke="#484848" stroke-width="1.300"/><path d="M1.500 2.700h13" stroke="#484848" stroke-width="2.400"/><path d="M4 7h3M4 9.500h3M4 12h3M9 7h3M9 9.500h3" stroke="#5a5a5a" stroke-width="1.200"/></svg>
<div class="t" id="t37" style="left:62.70px;top:168.44px;letter-spacing:-0.06px;">HumanResources.uspUpdateEmployeeLogin</div>
<svg class="a" style="left:34.50px;top:185.12px" width="7.2" height="7.2" viewBox="0 0 9 9"><rect x="0.500" y="0.500" width="8" height="8" fill="#fff" stroke="#919191" stroke-width="1"/><path d="M2.500 4.500h4M4.500 2.500v4" stroke="#2b3c8c" stroke-width="1"/></svg>
<svg class="a" style="left:47.40px;top:182.42px" width="12" height="12" viewBox="0 0 16 16"><rect x="1.500" y="1.500" width="13" height="13" fill="#f0f0f0" stroke="#484848" stroke-width="1.300"/><path d="M1.500 2.700h13" stroke="#484848" stroke-width="2.400"/><path d="M4 7h3M4 9.500h3M4 12h3M9 7h3M9 9.500h3" stroke="#5a5a5a" stroke-width="1.200"/></svg>
<div class="t" id="t38" style="left:62.70px;top:182.28px;letter-spacing:-0.06px;">HumanResources.uspUpdateEmployeePersonalInfo</div>
<svg class="a" style="left:20.00px;top:198.96px" width="7.2" height="7.2" viewBox="0 0 9 9"><rect x="0.500" y="0.500" width="8" height="8" fill="#fff" stroke="#919191" stroke-width="1"/><path d="M2.500 4.500h4M4.500 2.500v4" stroke="#2b3c8c" stroke-width="1"/></svg>
<svg class="a" style="left:32.40px;top:195.76px" width="12" height="12" viewBox="0 0 16 16"><path d="M1 3h5.500l1 1.500H15V14H1z" fill="#dcb67a"/></svg>
<div class="t" id="t39" style="left:48.20px;top:196.12px;letter-spacing:0.063px;">Functions</div>
<svg class="a" style="left:20.00px;top:212.80px" width="7.2" height="7.2" viewBox="0 0 9 9"><rect x="0.500" y="0.500" width="8" height="8" fill="#fff" stroke="#919191" stroke-width="1"/><path d="M2.500 4.500h4M4.500 2.500v4" stroke="#2b3c8c" stroke-width="1"/></svg>
<svg class="a" style="left:32.40px;top:209.60px" width="12" height="12" viewBox="0 0 16 16"><path d="M1 3h5.500l1 1.500H15V14H1z" fill="#dcb67a"/></svg>
<div class="t" id="t40" style="left:48.20px;top:209.96px;letter-spacing:-0.144px;">Database Triggers</div>
<svg class="a" style="left:20.00px;top:226.64px" width="7.2" height="7.2" viewBox="0 0 9 9"><rect x="0.500" y="0.500" width="8" height="8" fill="#fff" stroke="#919191" stroke-width="1"/><path d="M2.500 4.500h4M4.500 2.500v4" stroke="#2b3c8c" stroke-width="1"/></svg>
<svg class="a" style="left:32.40px;top:223.44px" width="12" height="12" viewBox="0 0 16 16"><path d="M1 3h5.500l1 1.500H15V14H1z" fill="#dcb67a"/></svg>
<div class="t" id="t41" style="left:48.20px;top:223.80px;letter-spacing:-0.102px;">Assemblies</div>
<svg class="a" style="left:20.00px;top:240.48px" width="7.2" height="7.2" viewBox="0 0 9 9"><rect x="0.500" y="0.500" width="8" height="8" fill="#fff" stroke="#919191" stroke-width="1"/><path d="M2.500 4.500h4M4.500 2.500v4" stroke="#2b3c8c" stroke-width="1"/></svg>
<svg class="a" style="left:32.40px;top:237.28px" width="12" height="12" viewBox="0 0 16 16"><path d="M1 3h5.500l1 1.500H15V14H1z" fill="#dcb67a"/></svg>
<div class="t" id="t42" style="left:48.20px;top:237.64px;letter-spacing:-0.343px;">Types</div>
<svg class="a" style="left:20.00px;top:254.32px" width="7.2" height="7.2" viewBox="0 0 9 9"><rect x="0.500" y="0.500" width="8" height="8" fill="#fff" stroke="#919191" stroke-width="1"/><path d="M2.500 4.500h4M4.500 2.500v4" stroke="#2b3c8c" stroke-width="1"/></svg>
<svg class="a" style="left:32.40px;top:251.12px" width="12" height="12" viewBox="0 0 16 16"><path d="M1 3h5.500l1 1.500H15V14H1z" fill="#dcb67a"/></svg>
<div class="t" id="t43" style="left:48.20px;top:251.48px;letter-spacing:-0.303px;">Rules</div>
<svg class="a" style="left:20.00px;top:268.16px" width="7.2" height="7.2" viewBox="0 0 9 9"><rect x="0.500" y="0.500" width="8" height="8" fill="#fff" stroke="#919191" stroke-width="1"/><path d="M2.500 4.500h4M4.500 2.500v4" stroke="#2b3c8c" stroke-width="1"/></svg>
<svg class="a" style="left:32.40px;top:264.96px" width="12" height="12" viewBox="0 0 16 16"><path d="M1 3h5.500l1 1.500H15V14H1z" fill="#dcb67a"/></svg>
<div class="t" id="t44" style="left:48.20px;top:265.32px;letter-spacing:-0.029px;">Defaults</div>
<svg class="a" style="left:20.00px;top:282.00px" width="7.2" height="7.2" viewBox="0 0 9 9"><rect x="0.500" y="0.500" width="8" height="8" fill="#fff" stroke="#919191" stroke-width="1"/><path d="M2.500 4.500h4M4.500 2.500v4" stroke="#2b3c8c" stroke-width="1"/></svg>
<svg class="a" style="left:32.40px;top:278.80px" width="12" height="12" viewBox="0 0 16 16"><path d="M1 3h5.500l1 1.500H15V14H1z" fill="#dcb67a"/></svg>
<div class="t" id="t45" style="left:48.20px;top:279.16px;letter-spacing:-0.283px;">Sequences</div>
<svg class="a" style="left:5.50px;top:295.84px" width="7.2" height="7.2" viewBox="0 0 9 9"><rect x="0.500" y="0.500" width="8" height="8" fill="#fff" stroke="#919191" stroke-width="1"/><path d="M2.500 4.500h4M4.500 2.500v4" stroke="#2b3c8c" stroke-width="1"/></svg>
<svg class="a" style="left:17.90px;top:292.64px" width="12" height="12" viewBox="0 0 16 16"><path d="M1 3h5.500l1 1.500H15V14H1z" fill="#dcb67a"/></svg>
<div class="t" id="t46" style="left:33.70px;top:293.00px;letter-spacing:-0.174px;">Service Broker</div>
<svg class="a" style="left:5.50px;top:309.68px" width="7.2" height="7.2" viewBox="0 0 9 9"><rect x="0.500" y="0.500" width="8" height="8" fill="#fff" stroke="#919191" stroke-width="1"/><path d="M2.500 4.500h4M4.500 2.500v4" stroke="#2b3c8c" stroke-width="1"/></svg>
<svg class="a" style="left:17.90px;top:306.48px" width="12" height="12" viewBox="0 0 16 16"><path d="M1 3h5.500l1 1.500H15V14H1z" fill="#dcb67a"/></svg>
<div class="t" id="t47" style="left:33.70px;top:306.84px;letter-spacing:-0.147px;">Storage</div>
<svg class="a" style="left:5.50px;top:323.52px" width="7.2" height="7.2" viewBox="0 0 9 9"><rect x="0.500" y="0.500" width="8" height="8" fill="#fff" stroke="#919191" stroke-width="1"/><path d="M2.500 4.500h4M4.500 2.500v4" stroke="#2b3c8c" stroke-width="1"/></svg>
<svg class="a" style="left:17.90px;top:320.32px" width="12" height="12" viewBox="0 0 16 16"><path d="M1 3h5.500l1 1.500H15V14H1z" fill="#dcb67a"/></svg>
<div class="t" id="t48" style="left:33.70px;top:320.68px;letter-spacing:-0.089px;">Security</div>
<svg class="a" style="left:2.80px;top:332.36px" width="12" height="12" viewBox="0 0 16 16"><path d="M2 4v8c0 2.500 12 2.500 12 0V4" fill="#2b2b2b"/><ellipse cx="8" cy="4" rx="6" ry="2.500" fill="#f4f4f4" stroke="#2b2b2b" stroke-width="1.100"/></svg>
<div class="t" id="t49" style="left:18.60px;top:332.72px;letter-spacing:-0.06px;">BicycleStoreDev</div>
</div>
<div class="a" style="left:189.50px;top:121.70px;width:13.00px;height:341.50px;background:#f0f0f0;"></div>
<svg class="a" style="left:192.00px;top:127.50px" width="7" height="5" viewBox="0 0 9 6"><path d="M1 5l3.500-3.500L8 5" fill="none" stroke="#606060" stroke-width="1.400"/></svg>
<div class="a" style="left:190.20px;top:199.50px;width:10.70px;height:171.00px;background:#cdcdcd;"></div>
<svg class="a" style="left:192.00px;top:453.00px" width="7" height="5" viewBox="0 0 9 6"><path d="M1 1l3.500 3.500L8 1" fill="none" stroke="#606060" stroke-width="1.400"/></svg>
<div class="a" style="left:6.50px;top:463.20px;width:196.00px;height:12.50px;background:#f0f0f0;"></div>
<svg class="a" style="left:11.50px;top:466.00px" width="5" height="7" viewBox="0 0 6 9"><path d="M5 1L1.500 4.500 5 8" fill="none" stroke="#606060" stroke-width="1.400"/></svg>
<div class="a" style="left:43.00px;top:464.20px;width:88.50px;height:10.50px;background:#cdcdcd;"></div>
<svg class="a" style="left:179.50px;top:466.00px" width="5" height="7" viewBox="0 0 6 9"><path d="M1 1l3.500 3.500L1 8" fill="none" stroke="#606060" stroke-width="1.400"/></svg>
<div class="a" style="left:208.50px;top:85.00px;width:197.75px;height:14.00px;background:#fff29d;"></div>
<div class="t" id="t50" style="left:212.50px;top:87.26px;color:#1e1e1e;letter-spacing:-0.177px;">SQLQuery2.sql - JO...tureWorks2019 (sa)</div>
<svg class="a" style="left:380.38px;top:89.12px" width="8.25" height="6.75" viewBox="0 0 11 9"><path d="M4.500 1.500v6M4.500 2.500h5v4h-5M9.500 5.500h-5M1 4.500h3.500" fill="none" stroke="#4a4530" stroke-width="1.100"/></svg>
<svg class="a" style="left:394.75px;top:88.70px" width="8" height="8" viewBox="0 0 10 10"><path d="M1 1l8 8M9 1l-8 8" stroke="#3a3624" stroke-width="1.400"/></svg>
<svg class="a" style="left:754.48px;top:91.50px" width="5.8500000000000005" height="2.9899999999999998" viewBox="0 0 6 3"><path d="M0 0h6l-3 3z" fill="#d6dbe9"/></svg>
<div class="a" style="left:208.50px;top:98.50px;width:554.00px;height:2.60px;background:#fff4ae;"></div>
<div class="a" id="editor" style="left:208.5px;top:101.0px;width:554px;height:376.5px;background:#fff;overflow:hidden">
<div class="a" style="left:0.00px;top:0.00px;width:16.10px;height:345.00px;background:#e6e7ea;"></div>
<div class="a" style="left:0.00px;top:0.00px;width:1.20px;height:376.50px;background:#c3cbdc;"></div>
<div class="a" style="left:16.10px;top:0.00px;width:3.70px;height:345.00px;background:#ffee62;"></div>
<div class="a" style="left:25.10px;top:33.00px;width:0.80px;height:35.00px;background:#a5a5a5;"></div>
<div class="a" style="left:25.10px;top:83.00px;width:0.80px;height:262.00px;background:#a5a5a5;"></div>
<div class="a" id="codeclip" style="left:0;top:0;width:538.75px;height:345px;overflow:hidden">
<div class="code" style="left:30.50px;top:25.20px"><span class="k">ALTER PROCEDURE</span> [dbo]<span class="g">.</span>[uspGetBillOfMaterials]</div>
<svg class="a" style="left:22.00px;top:27.05px" width="7" height="7" viewBox="0 0 9 9"><rect x="0.500" y="0.500" width="8" height="8" fill="#fff" stroke="#9a9a9a"/><path d="M2.500 4.500h4" stroke="#555" stroke-width="1"/></svg>
<div class="code" style="left:30.50px;top:37.52px">    @StartProductID [int]<span class="g">,</span></div>
<div class="code" style="left:30.50px;top:49.84px">    @CheckDate [datetime]</div>
<div class="code" style="left:30.50px;top:62.16px"><span class="k">AS</span></div>
<div class="code" style="left:30.50px;top:74.48px"><span class="k">BEGIN</span></div>
<svg class="a" style="left:22.00px;top:76.33px" width="7" height="7" viewBox="0 0 9 9"><rect x="0.500" y="0.500" width="8" height="8" fill="#fff" stroke="#9a9a9a"/><path d="M2.500 4.500h4" stroke="#555" stroke-width="1"/></svg>
<div class="code" style="left:30.50px;top:86.80px">    <span class="k">SET NOCOUNT ON</span><span class="g">;</span></div>
<div class="code" style="left:30.50px;top:111.44px">    <span class="c">-- Use recursive query to generate a multi-level Bill of Material (i.e. all level 1</span></div>
<div class="code" style="left:30.50px;top:123.76px">    <span class="c">-- components of a level 0 assembly, all level 2 components of a level 1 assembly)</span></div>
<div class="code" style="left:30.50px;top:136.08px">    <span class="c">-- The CheckDate eliminates any components that are no longer used in the product on this date.</span></div>
<div class="code" style="left:30.50px;top:148.40px">    <span class="k">WITH</span> [BOM_cte]<span class="g">(</span>[ProductAssemblyID]<span class="g">,</span> [ComponentID]<span class="g">,</span> [ComponentDesc]<span class="g">,</span> [PerAssemblyQty]<span class="g">,</span> [StandardCost]<span class="g">,</span></div>
<svg class="a" style="left:22.00px;top:150.25px" width="7" height="7" viewBox="0 0 9 9"><rect x="0.500" y="0.500" width="8" height="8" fill="#fff" stroke="#9a9a9a"/><path d="M2.500 4.500h4" stroke="#555" stroke-width="1"/></svg>
<div class="code" style="left:30.50px;top:160.72px">    <span class="k">AS</span> <span class="g">(</span></div>
<div class="code" style="left:30.50px;top:173.04px">        <span class="k">SELECT</span> b<span class="g">.</span>[ProductAssemblyID]<span class="g">,</span> b<span class="g">.</span>[ComponentID]<span class="g">,</span> p<span class="g">.</span>[Name]<span class="g">,</span> b<span class="g">.</span>[PerAssemblyQty]<span class="g">,</span> p<span class="g">.</span>[StandardCost]<span class="g">,</span></div>
<div class="code" style="left:30.50px;top:185.36px">        <span class="k">FROM</span> [Production]<span class="g">.</span>[BillOfMaterials] b</div>
<div class="code" style="left:30.50px;top:197.68px">            <span class="g">INNER JOIN</span> [Production]<span class="g">.</span>[Product] p</div>
<div class="code" style="left:30.50px;top:210.00px">            <span class="k">ON</span> b<span class="g">.</span>[ComponentID] <span class="g">=</span> p<span class="g">.</span>[ProductID]</div>
<div class="code" style="left:30.50px;top:222.32px">        <span class="k">WHERE</span> b<span class="g">.</span>[ProductAssemblyID] <span class="g">=</span> @StartProductID</div>
<div class="code" style="left:30.50px;top:234.64px">            <span class="g">AND</span> @CheckDate <span class="g">&gt;=</span> b<span class="g">.</span>[StartDate]</div>
<div class="code" style="left:30.50px;top:246.96px">            <span class="g">AND</span> @CheckDate <span class="g">&lt;=</span> <span class="m">ISNULL</span><span class="g">(</span>b<span class="g">.</span>[EndDate]<span class="g">,</span> @CheckDate<span class="g">)</span></div>
<div class="code" style="left:30.50px;top:259.28px">        <span class="k">UNION</span> <span class="g">ALL</span></div>
<div class="code" style="left:30.50px;top:271.60px">        <span class="k">SELECT</span> b<span class="g">.</span>[ProductAssemblyID]<span class="g">,</span> b<span class="g">.</span>[ComponentID]<span class="g">,</span> p<span class="g">.</span>[Name]<span class="g">,</span> b<span class="g">.</span>[PerAssemblyQty]<span class="g">,</span> p<span class="g">.</span>[StandardCost]<span class="g">,</span></div>
<div class="code" style="left:30.50px;top:283.92px">        <span class="k">FROM</span> [BOM_cte] cte</div>
<div class="code" style="left:30.50px;top:296.24px">            <span class="g">INNER JOIN</span> [Production]<span class="g">.</span>[BillOfMaterials] b</div>
<div class="code" style="left:30.50px;top:308.56px">            <span class="k">ON</span> b<span class="g">.</span>[ProductAssemblyID] <span class="g">=</span> cte<span class="g">.</span>[ComponentID]</div>
<div class="code" style="left:30.50px;top:320.88px">            <span class="g">INNER JOIN</span> [Production]<span class="g">.</span>[Product] p</div>
<div class="code" style="left:30.50px;top:333.20px">            <span class="k">ON</span> b<span class="g">.</span>[ComponentID] <span class="g">=</span> p<span class="g">.</span>[ProductID]</div>
</div>
<div class="a" style="left:538.75px;top:0.00px;width:15.25px;height:345.00px;background:#e8e8ec;"></div>
<div class="a" style="left:538.75px;top:0.00px;width:15.25px;height:12.50px;background:#eef0fa;border:0.8px solid #aab0c6;"></div>
<svg class="a" style="left:541.30px;top:1.20px" width="10" height="10" viewBox="0 0 12 12"><path d="M1 4.800h10M1 7.200h10" stroke="#3a3a4a" stroke-width="0.900"/><path d="M6 0.500v11" stroke="#3a3a4a" stroke-width="0.800"/><path d="M4.500 2.500L6 0.500l1.500 2zM4.500 9.500L6 11.500l1.500-2z" fill="#3a3a4a"/></svg>
<svg class="a" style="left:542.90px;top:17.50px" width="7" height="4" viewBox="0 0 7 4"><path d="M0 4L3.500 0 7 4z" fill="#868999"/></svg>
<div class="a" style="left:538.75px;top:24.75px;width:15.25px;height:1.80px;background:#0000cd;"></div>
<div class="a" style="left:539.75px;top:26.50px;width:3.50px;height:198.50px;background:#ffee62;"></div>
<div class="a" style="left:543.50px;top:61.00px;width:7.00px;height:110.00px;background:#c2c3c9;"></div>
<svg class="a" style="left:542.90px;top:338.00px" width="7" height="4" viewBox="0 0 7 4"><path d="M0 0L3.500 4 7 0z" fill="#868999"/></svg>
<div class="a" style="left:0.00px;top:345.00px;width:554.00px;height:14.50px;background:#e8e8ec;"></div>
<div class="a" style="left:1.10px;top:345.50px;width:45.65px;height:12.70px;background:#fff;border:0.8px solid #c9cede;"></div>

<div class="t" id="t51" style="left:3.25px;top:346.06px;letter-spacing:-0.536px;">100 %</div>
<svg class="a" style="left:40.25px;top:351.40px" width="4.5" height="2.3" viewBox="0 0 6 3"><path d="M0 0h6l-3 3z" fill="#1e1e1e"/></svg>
<svg class="a" style="left:52.00px;top:348.50px" width="4" height="7" viewBox="0 0 4 7"><path d="M4 0L0 3.500 4 7z" fill="#868999"/></svg>
<div class="a" style="left:61.00px;top:348.70px;width:197.25px;height:6.80px;background:#c2c3c9;"></div>
<svg class="a" style="left:530.50px;top:348.50px" width="4" height="7" viewBox="0 0 4 7"><path d="M0 0L4 3.500 0 7z" fill="#868999"/></svg>
<div class="a" style="left:0.00px;top:359.50px;width:554.00px;height:17.00px;background:#f2e58f;"></div>
<svg class="a" style="left:3.00px;top:361.20px" width="12" height="12" viewBox="0 0 16 16"><g transform="translate(-1,0) scale(0.8)"><path d="M4.200 0.500h2.300v4h-2.300zM9.500 0.500h2.300v4h-2.300zM3 4.300h10v4.700L9.800 11.200V15.500H6.200V11.200L3 9z" fill="#2b2b2b"/></g><circle cx="11.500" cy="11.500" r="3.800" fill="#3d9a3a"/><path d="M9.500 11.500l1.500 1.600 2.400-3" stroke="#fff" stroke-width="1.100" fill="none"/></svg>
<div class="t" id="t52" style="left:19.25px;top:361.56px;letter-spacing:0.075px;">Connected. (1/1)</div>
<div class="t" id="t53" style="left:184.50px;top:361.56px;letter-spacing:-0.552px;">JORDANSANDERS\SQLEXPRESS (1...</div>
<div class="t" id="t54" style="left:339.50px;top:361.56px;letter-spacing:-0.359px;">sa (54)</div>
<div class="t" id="t55" style="left:375.90px;top:361.56px;letter-spacing:-0.061px;">AdventureWorks2019</div>
<div class="t" id="t56" style="left:471.50px;top:361.56px;letter-spacing:-0.418px;">00:00:00</div>
<div class="t" id="t57" style="left:513.50px;top:361.56px;letter-spacing:-0.136px;">0 rows</div>
<div class="a" style="left:179.85px;top:362.00px;width:0.90px;height:12.50px;background:#c9bf7a;"></div>
<div class="a" style="left:180.75px;top:362.00px;width:0.70px;height:12.50px;background:#fbf4c4;"></div>
<div class="a" style="left:334.10px;top:362.00px;width:0.90px;height:12.50px;background:#c9bf7a;"></div>
<div class="a" style="left:335.00px;top:362.00px;width:0.70px;height:12.50px;background:#fbf4c4;"></div>
<div class="a" style="left:370.60px;top:362.00px;width:0.90px;height:12.50px;background:#c9bf7a;"></div>
<div class="a" style="left:371.50px;top:362.00px;width:0.70px;height:12.50px;background:#fbf4c4;"></div>
<div class="a" style="left:466.10px;top:362.00px;width:0.90px;height:12.50px;background:#c9bf7a;"></div>
<div class="a" style="left:467.00px;top:362.00px;width:0.70px;height:12.50px;background:#fbf4c4;"></div>
<div class="a" style="left:508.10px;top:362.00px;width:0.90px;height:12.50px;background:#c9bf7a;"></div>
<div class="a" style="left:509.00px;top:362.00px;width:0.70px;height:12.50px;background:#fbf4c4;"></div>
</div>
<div class="a" style="left:1.00px;top:1.00px;width:1.00px;height:79.00px;background:#eceff7;"></div>
<div class="a" style="left:1.00px;top:1.00px;width:766.00px;height:1.00px;background:#eceff7;"></div>
<div class="a" style="left:0.00px;top:0.00px;width:1.00px;height:501.00px;background:#747474;"></div>
<div class="a" style="left:767.00px;top:0.00px;width:1.00px;height:501.00px;background:#747474;"></div>
<div class="a" style="left:0.00px;top:0.00px;width:768.00px;height:1.00px;background:#747474;"></div>
<div class="a" style="left:0.00px;top:499.80px;width:768.00px;height:1.20px;background:#50657a;"></div>
</div>
</body></html>
